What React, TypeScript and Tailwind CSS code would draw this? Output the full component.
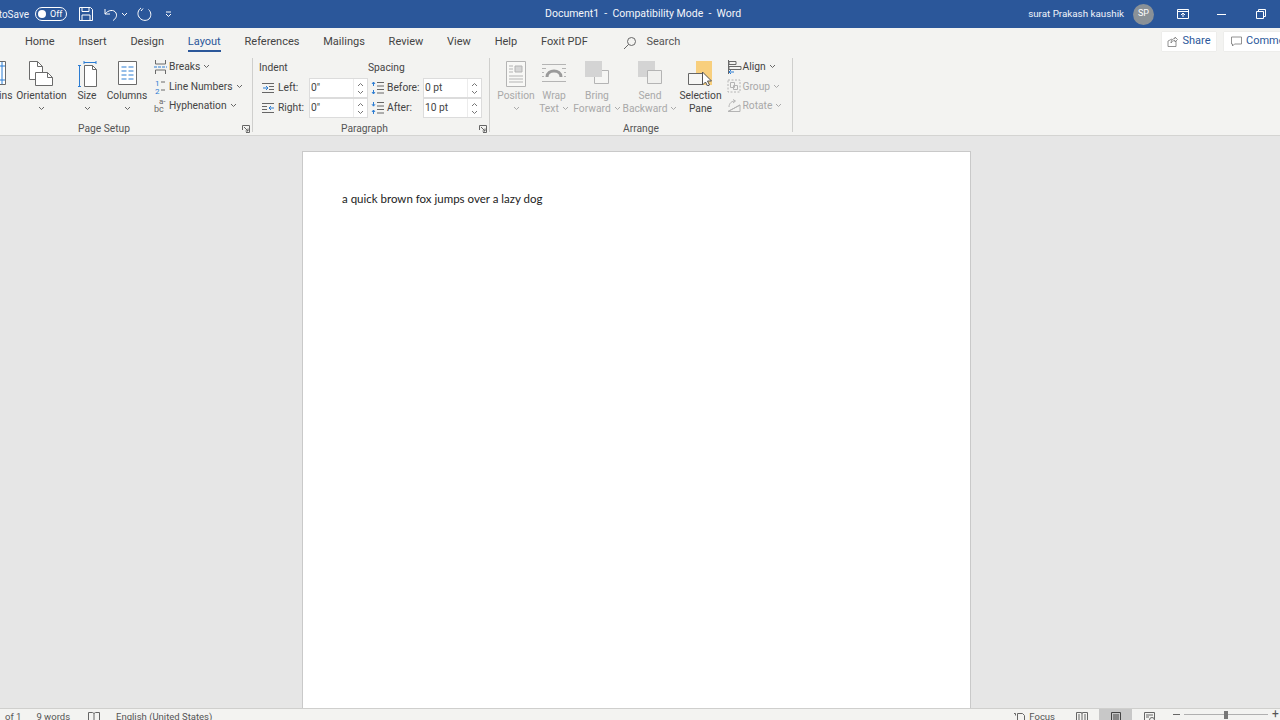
import React from "react";

const B = "#2b7cd3";
const G = "#6a6a6a";
const D = "#b4b4b4";

function Chev({ c = "#666", className = "" }: { c?: string; className?: string }) {
  return (
    <svg width="7" height="5" viewBox="0 0 7 5" className={className}>
      <path d="M1 1l2.500 2.500L6 1" fill="none" stroke={c} strokeWidth="1" />
    </svg>
  );
}

function Large({ w, icon, l1, l2, chev, disabled, ml = "" }: { w: string; icon: React.ReactNode; l1: string; l2?: string; chev?: boolean; disabled?: boolean; ml?: string }) {
  return (
    <div className={`flex flex-col items-center shrink-0 ${w} ${ml} ${disabled ? "text-[#a9a9a9]" : "text-[#444]"}`}>
      <div className="h-[28px] mt-[6px] flex items-start justify-center">{icon}</div>
      <div className="h-[13px] leading-[13px] whitespace-nowrap">{l1}</div>
      <div className="h-[13px] leading-[13px] whitespace-nowrap flex items-center gap-[3px] justify-center">
        {l2}
        {chev && <Chev c={disabled ? "#aaa" : "#666"} />}
      </div>
    </div>
  );
}

function SmallBtn({ icon, label, disabled }: { icon: React.ReactNode; label: string; disabled?: boolean }) {
  return (
    <div className={`flex items-center h-[19.500px] whitespace-nowrap ${disabled ? "text-[#a9a9a9]" : "text-[#444]"}`}>
      <span className="w-[15px] h-[16px] flex items-center justify-center shrink-0">{icon}</span>
      <span className="ml-[1px]">{label}</span>
      <Chev className="ml-[3px]" c={disabled ? "#aaa" : "#666"} />
    </div>
  );
}

function Launcher() {
  return (
    <svg width="8" height="8" viewBox="0 0 8 8" className="shrink-0">
      <path d="M.5 5V.5H7.500V7.500H4" fill="none" stroke="#666" />
      <path d="M2 2l4 4M6 3.500V6H3.500" fill="none" stroke="#666" />
    </svg>
  );
}

function Spin({ value }: { value: string }) {
  return (
    <div className="h-[20px] w-[59px] bg-white border border-[#dcdcdc] flex items-center shrink-0 text-[#444] pl-[1px]">
      <span className="flex-1 leading-[18px]">{value}</span>
      <div className="w-[14px] h-[18px] border-l border-[#ececec] flex flex-col items-center justify-center gap-[3px]">
        <Chev className="rotate-180" c="#777" />
        <Chev c="#777" />
      </div>
    </div>
  );
}

function LinesIcon({ right }: { right?: boolean }) {
  return (
    <svg width="13" height="12" viewBox="0 0 13 12">
      <path d={right ? "M0 1.500h12M0 4.500h5M0 7.500h5M0 10.500h12" : "M0 1.500h12M7 4.500h5M7 7.500h5M0 10.500h12"} stroke="#666" fill="none" />
      {right ? <path d="M12 6H7M9 4L7 6l2 2" stroke={B} fill="none" /> : <path d="M1 6h5M4 4l2 2-2 2" stroke={B} fill="none" />}
    </svg>
  );
}

function SpacingIcon({ before }: { before?: boolean }) {
  return (
    <svg width="14" height="14" viewBox="0 0 14 14">
      <path d="M6 1.500h7M6 5h7M6 8.500h7M6 12h7" stroke="#666" fill="none" />
      <path d={before ? "M2.500 1v4M1 3l1.500-2L4 3M2.500 9v4M1 11l1.500 2L4 11" : "M2.500 1v4M1 3.200l1.500 2L4 3.200M2.500 9v4M1 11l1.500-2L4 11"} stroke={B} fill="none" />
    </svg>
  );
}

export default function App() {
  const tabs = ["Home", "Insert", "Design", "Layout", "References", "Mailings", "Review", "View", "Help", "Foxit PDF"];
  return (
    <div className="w-[1280px] h-[720px] overflow-hidden flex flex-col bg-[#e6e6e6] text-[11px] font-['Roboto','Open_Sans',sans-serif]">
      {/* Title bar */}
      <div className="h-[28px] shrink-0 bg-[#2b579a] text-white flex items-center overflow-hidden">
        <div className="w-[545px] shrink-0 flex items-center overflow-hidden">
          <span className="-ml-[31px] w-[60px] text-right shrink-0 text-[#f0f4fa] text-[10px]">AutoSave</span>
          <div className="ml-[6px] w-[32px] h-[14px] rounded-full border border-white flex items-center shrink-0">
            <span className="w-[8px] h-[8px] rounded-full bg-white ml-[2px]" />
            <span className="ml-[4px] text-[9px] leading-none">Off</span>
          </div>
          <svg width="14" height="14" viewBox="0 0 14 14" className="ml-[12px] shrink-0">
            <path d="M.5.5h11l2 2v11H.5zM3 .5v4h7v-4M3 13.500V8h8v5.500" fill="none" stroke="#fff" />
          </svg>
          <svg width="15" height="13" viewBox="0 0 15 13" className="ml-[11px] shrink-0">
            <path d="M1 1v5h5M1 6c3-4 9-5 11-1 1.500 3-.5 6-3 7.500" fill="none" stroke="#fff" />
          </svg>
          <Chev c="#fff" className="ml-[2px]" />
          <svg width="15" height="15" viewBox="0 0 15 15" className="ml-[9px] shrink-0">
            <path d="M6 1.500l-2 2.500M4 1c-3 2-4 6-2 9 2 3.500 7 4.500 10 2 2.500-2.500 2.500-7-.5-9.500" fill="none" stroke="#fff" />
          </svg>
          <svg width="7" height="7" viewBox="0 0 7 7" className="ml-[13px] shrink-0">
            <path d="M1 1h5M1 3l2.500 2.500L6 3" fill="none" stroke="#fff" />
          </svg>
        </div>
        <div className="whitespace-pre text-[#f4f6fa] text-[10.500px]">Document1  -  Compatibility Mode  -  Word</div>
        <div className="ml-auto flex items-center shrink-0">
          <span className="text-[#f0f4fa] text-[9.800px]">surat Prakash kaushik</span>
          <span className="ml-[9px] w-[21px] h-[21px] rounded-full bg-[#8a9197] text-[9px] flex items-center justify-center">SP</span>
          <svg width="12" height="10" viewBox="0 0 12 10" className="ml-[23px]">
            <path d="M.5.5h11v9H.5zM.5 2.500h11M6 8V4M4 6l2-2 2 2" fill="none" stroke="#fff" />
          </svg>
          <span className="ml-[28px] w-[9px] h-px bg-white" />
          <svg width="10" height="10" viewBox="0 0 10 10" className="ml-[30px]">
            <path d="M.5 2.500h7v7h-7zM2.500 2.500v-2h7v7h-2" fill="none" stroke="#fff" />
          </svg>
          <span className="w-[14px]" />
        </div>
      </div>

      {/* Tabs */}
      <div className="h-[27px] shrink-0 bg-[#f3f3f1] flex items-center pl-[25px] pt-[2px] gap-[23.800px] text-[11px] text-[#444] whitespace-nowrap">
        {tabs.map((t) => (
          <div key={t} className={`h-[25px] flex items-center relative ${t === "Layout" ? "text-[#2b579a]" : ""}`}>
            {t}
            {t === "Layout" && <span className="absolute left-0 right-0 bottom-[3px] h-[2px] bg-[#2b579a]" />}
          </div>
        ))}
        <svg width="14" height="14" viewBox="0 0 14 14" className="ml-[11px]">
          <circle cx="8.500" cy="5.500" r="4" fill="none" stroke="#666" />
          <path d="M5.500 8.500L1 13" stroke="#666" />
        </svg>
        <span className="-ml-[14px] text-[#555]">Search</span>
        <div className="ml-auto flex items-center gap-[8px] -mr-[40px] -mt-[2px]">
          <div className="w-[54px] h-[19px] bg-white flex items-center justify-center gap-[4px] text-[#2b579a] shadow-[0_0_1px_#ccc]">
            <svg width="11" height="11" viewBox="0 0 11 11"><path d="M1 5v5.500h8V5M1 5l4-2 M4 7c0-3 2-4.500 4-4.500V1l2.500 2.500L8 6V4.500C6 4.500 5 5.500 4 7z" fill="none" stroke="#777" strokeWidth=".8" /></svg>
            Share
          </div>
          <div className="w-[96px] h-[19px] bg-white flex items-center pl-[7px] gap-[4px] text-[#2b579a] shadow-[0_0_1px_#ccc]">
            <svg width="11" height="11" viewBox="0 0 11 11"><path d="M.5 1h10v7h-7l-2 2V8h-1z" fill="none" stroke="#777" strokeWidth=".8" /></svg>
            Comments
          </div>
        </div>
      </div>

      {/* Ribbon */}
      <div className="h-[81px] shrink-0 bg-[#f3f3f1] border-b border-[#d4d4d2] flex text-[10.250px] whitespace-nowrap">
        {/* Page Setup */}
        <div className="w-[253px] shrink-0 flex flex-col overflow-hidden">
          <div className="flex-1 flex">
            <Large w="w-[40px]" ml="-ml-[26px]" l1="Margins" chev icon={
              <svg width="24" height="24" viewBox="0 0 24 24"><path d="M.5.500h23v23H.5z" fill="#fff" stroke={G} /><path d="M4 1v22M20 1v22M1 5h22M1 19h22" stroke={B} fill="none" /></svg>
            } />
            <Large w="w-[53px]" ml="ml-[1px]" l1="Orientation" chev icon={
              <svg width="25" height="25" viewBox="0 0 25 25"><path d="M.5.500h8l5 5v13H.5z" fill="#fff" stroke={G} /><path d="M8.500.500v5h5" fill="none" stroke={G} /><path d="M6.500 11.500h12l5 5v8h-17z" fill="#fff" stroke={G} /><path d="M18.500 11.500v5h5" fill="none" stroke={G} /></svg>
            } />
            <Large w="w-[28px]" ml="ml-[5px]" l1="Size" chev icon={
              <svg width="19" height="26" viewBox="0 0 19 26"><path d="M6.500 4.500h8l4 4v17h-12z" fill="#fff" stroke={G} /><path d="M14.500 4.500v4h4" fill="none" stroke={G} /><path d="M1.500 5v20M0 4.500h3M0 25.500h3M6 1.500h12M6 0v3M18 0v3" stroke={B} fill="none" /></svg>
            } />
            <Large w="w-[44px]" ml="ml-[4px]" l1="Columns" chev icon={
              <svg width="19" height="24" viewBox="0 0 19 24"><path d="M.5.500h18v23H.5z" fill="#fff" stroke={G} /><path d="M3.500 6h5M10.500 6h5M3.500 10h5M10.500 10h5M3.500 14h5M10.500 14h5M3.500 18h5M10.500 18h5" stroke={B} fill="none" /></svg>
            } />
            <div className="ml-[4px] pt-[2px] flex flex-col">
              <SmallBtn label="Breaks" icon={<svg width="13" height="14" viewBox="0 0 13 14"><path d="M1.500 0v4h10V0M1.500 14v-4h10v4" stroke={G} fill="none" /><path d="M0 7h13" stroke={B} strokeDasharray="3 1" /></svg>} />
              <SmallBtn label="Line Numbers" icon={<svg width="13" height="15" viewBox="0 0 13 15"><text x="1" y="7" fontSize="8" fill={B}>1</text><text x="1" y="14.500" fontSize="8" fill={B}>2</text><path d="M7 3h4M7 11h4" stroke={G} /></svg>} />
              <SmallBtn label="Hyphenation" icon={<svg width="14" height="15" viewBox="0 0 14 15"><text x="0" y="14" fontSize="9" fill={G}>bc</text><text x="5" y="6" fontSize="8" fill={G}>a-</text></svg>} />
            </div>
          </div>
          <div className="h-[14px] pt-[1px] flex items-center text-[#555] relative pl-[78px]">
            Page Setup
            <span className="absolute right-[3px] top-[4px]"><Launcher /></span>
          </div>
        </div>
        <div className="w-px my-[3px] bg-[#cfcfcd] shrink-0 -ml-px" />

        {/* Paragraph */}
        <div className="w-[237px] shrink-0 flex flex-col text-[#444]">
          <div className="flex-1 flex pt-[5px] pl-[6px]">
            <div className="w-[109px] shrink-0 flex flex-col">
              <div className="h-[15px] leading-[15px]">Indent</div>
              <div className="h-[20px] mt-[3px] flex items-center">
                <span className="w-[16px] flex justify-end"><LinesIcon /></span>
                <span className="ml-[3px] w-[31px]">Left:</span>
                <Spin value={'0"'} />
              </div>
              <div className="h-[20px] flex items-center">
                <span className="w-[16px] flex justify-end"><LinesIcon right /></span>
                <span className="ml-[3px] w-[31px]">Right:</span>
                <Spin value={'0"'} />
              </div>
            </div>
            <div className="flex flex-col">
              <div className="h-[15px] leading-[15px]">Spacing</div>
              <div className="h-[20px] mt-[3px] flex items-center pl-[3px]">
                <SpacingIcon before />
                <span className="ml-[2px] w-[36px]">Before:</span>
                <Spin value="0 pt" />
              </div>
              <div className="h-[20px] flex items-center pl-[3px]">
                <SpacingIcon />
                <span className="ml-[2px] w-[36px]">After:</span>
                <Spin value="10 pt" />
              </div>
            </div>
          </div>
          <div className="h-[14px] pt-[1px] flex items-center text-[#555] relative pl-[88px]">
            Paragraph
            <span className="absolute right-[3px] top-[4px]"><Launcher /></span>
          </div>
        </div>
        <div className="w-px my-[3px] bg-[#cfcfcd] shrink-0 -ml-px" />

        {/* Arrange */}
        <div className="w-[303px] shrink-0 flex flex-col">
          <div className="flex-1 flex pl-[7px]">
            <Large disabled w="w-[38px]" l1="Position" chev icon={
              <svg width="20" height="26" viewBox="0 0 20 26"><path d="M.5.500h19v25H.5z" fill="#f8f8f6" stroke={D} /><path d="M9 5h7v6H9z" fill="#d6d6d6" stroke={D} /><path d="M3 5h4M3 8h4M3 11h4M3 15h14M3 18h14M3 21h14" stroke={D} /></svg>
            } />
            <Large disabled w="w-[38px]" l1="Wrap" l2="Text" chev icon={
              <svg width="24" height="20" viewBox="0 0 24 20" className="mt-[2px]"><path d="M0 1.500h24M0 18.500h24M0 5.500h4M20 5.500h4M0 9.500h2M22 9.500h2M0 13.500h2M22 13.500h2" stroke={D} /><path d="M5 14c0-8 14-8 14 0" fill="none" stroke="#9a9a9a" strokeWidth="3" /></svg>
            } />
            <Large disabled w="w-[48px]" l1="Bring" l2="Forward" chev icon={
              <svg width="24" height="23" viewBox="0 0 24 23"><path d="M9.500 9.500h14v13h-14z" fill="#f6f6f4" stroke={D} /><path d="M0 0h17v16H0z" fill="#d4d4d4" /></svg>
            } />
            <Large disabled w="w-[52px]" l1="Send" l2="Backward" chev ml="ml-[3px]" icon={
              <svg width="24" height="23" viewBox="0 0 24 23"><path d="M0 0h17v16H0z" fill="#d4d4d4" /><path d="M9.500 9.500h14v13h-14z" fill="#f0f0ee" stroke={D} /></svg>
            } />
            <Large w="w-[44px]" l1="Selection" l2="Pane" ml="ml-[2.500px]" icon={
              <svg width="26" height="25" viewBox="0 0 26 25"><path d="M8 0h16v24H8z" fill="#f8cf7d" /><path d="M.5 12.500h14v11H.5z" fill="#f6f6f4" stroke="#666" /><path d="M14.500 11v13l3-3 2 4 2-1-2-4h4z" fill="#fff" stroke="#555" /></svg>
            } />
            <div className="ml-[4px] pt-[2px] flex flex-col">
              <SmallBtn label="Align" icon={<svg width="15" height="14" viewBox="0 0 15 14"><path d="M1.500 0v14" stroke={G} /><path d="M2 1.500h7v3H2zM2 6.500h12v3H2z" fill="none" stroke={G} /><path d="M2 12h5M4 10l-2 2 2 2" stroke={B} fill="none" /></svg>} />
              <SmallBtn disabled label="Group" icon={<svg width="14" height="14" viewBox="0 0 14 14"><path d="M1 1h12v12H1z" fill="none" stroke={D} strokeDasharray="2 1.500" /><path d="M3.500 3.500h4v5h-4zM6.500 6.500h4v4h-4z" fill="none" stroke={D} /></svg>} />
              <SmallBtn disabled label="Rotate" icon={<svg width="14" height="14" viewBox="0 0 14 14"><path d="M1 12.500h12V6zM1 12.500L13 6" fill="none" stroke={D} /><path d="M2 8c0-4 3-6 6-6M6 .5L8.500 2 6 4" fill="none" stroke={D} /></svg>} />
            </div>
          </div>
          <div className="h-[14px] pt-[1px] flex items-center text-[#555] pl-[133px]">Arrange</div>
        </div>
        <div className="w-px my-[3px] bg-[#cfcfcd] shrink-0 -ml-px" />
      </div>

      {/* Document */}
      <div className="flex-1 min-h-0 overflow-hidden bg-[#e6e6e6] pt-[15px] pl-[302px]">
        <div className="w-[669px] h-[700px] bg-white border border-[#c9c9c9] pl-[39px] pt-[39px] text-[11.500px] leading-[15px] text-[#222] font-['Lato','Open_Sans',sans-serif]">
          a quick brown fox jumps over a lazy dog
        </div>
      </div>

      {/* Status bar */}
      <div className="h-[12px] shrink-0 bg-[#f3f3f1] border-t border-[#cfcfcd] overflow-hidden flex items-start text-[9.500px] text-[#555] whitespace-nowrap">
        <span className="ml-[5px] leading-[15px]">of 1</span>
        <span className="ml-[15px] leading-[15px]">9 words</span>
        <svg width="12" height="10" viewBox="0 0 12 10" className="ml-[18px] mt-[3px]"><path d="M.5.500h4l1.500 1 1.500-1h4v9h-11zM6 1.500V9" fill="none" stroke="#666" /></svg>
        <span className="ml-[16px] leading-[15px]">English (United States)</span>
        <div className="ml-auto flex items-start shrink-0">
          <svg width="12" height="12" viewBox="0 0 12 12" className="mt-[3px]"><path d="M3.500 1.500h5l2 2v8h-7zM0 1.500h1.500v2M12 1.500" fill="none" stroke="#666" /></svg>
          <span className="ml-[3px] leading-[15px]">Focus</span>
          <svg width="12" height="10" viewBox="0 0 12 10" className="ml-[21px] mt-[3px]"><path d="M.5.500h5l.5 1 .5-1h5v10h-11zM6 1v9M2 3h2M2 5h2M2 7h2M8 3h2M8 5h2M8 7h2" fill="none" stroke="#666" /></svg>
          <div className="ml-[11px] w-[33px] h-[12px] bg-[#c8c8c8] flex justify-center pt-[3px]">
            <svg width="10" height="11" viewBox="0 0 10 11"><path d="M.5.500h9v10h-9zM2 3h6M2 5h6M2 7h6" fill="none" stroke="#444" /></svg>
          </div>
          <svg width="12" height="11" viewBox="0 0 12 11" className="ml-[12px] mt-[3px]"><path d="M.5.500h10v8h-10zM2 3h7M2 5h3" fill="none" stroke="#666" /><circle cx="8" cy="8" r="2.500" fill="#f3f3f1" stroke="#666" /></svg>
          <span className="ml-[17px] mt-[5px] w-[7px] h-px bg-[#666]" />
          <div className="ml-[4px] w-[84px] h-[8px] relative shrink-0">
            <span className="absolute left-0 right-0 top-[5px] h-px bg-[#b0b0b0]" />
            <span className="absolute left-[40px] top-[2px] w-[4px] h-[8px] bg-[#777]" />
          </div>
          <span className="ml-[4px] w-[8px] leading-[10px] text-[12px]">+</span>
        </div>
      </div>
    </div>
  );
}
